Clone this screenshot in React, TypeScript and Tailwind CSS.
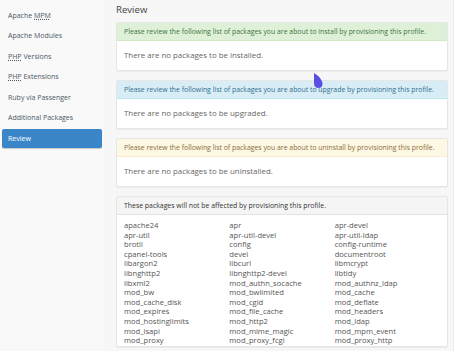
import React from 'react'

const nav = [
  { label: 'Apache', abbr: 'MPM', after: '' },
  { label: 'Apache Modules' },
  { label: '', abbr: 'PHP', after: ' Versions' },
  { label: '', abbr: 'PHP', after: ' Extensions' },
  { label: 'Ruby via Passenger' },
  { label: 'Additional Packages' },
]

const packages = [
  'apache24', 'apr', 'apr-devel',
  'apr-util', 'apr-util-devel', 'apr-util-ldap',
  'brotli', 'config', 'config-runtime',
  'cpanel-tools', 'devel', 'documentroot',
  'libargon2', 'libcurl', 'libmcrypt',
  'libnghttp2', 'libnghttp2-devel', 'libtidy',
  'libxml2', 'mod_authn_socache', 'mod_authnz_ldap',
  'mod_bw', 'mod_bwlimited', 'mod_cache',
  'mod_cache_disk', 'mod_cgid', 'mod_deflate',
  'mod_expires', 'mod_file_cache', 'mod_headers',
  'mod_hostinglimits', 'mod_http2', 'mod_ldap',
  'mod_lsapi', 'mod_mime_magic', 'mod_mpm_event',
  'mod_proxy', 'mod_proxy_fcgi', 'mod_proxy_http',
]

function Panel({ tone, title, children }: { tone: 'green' | 'blue' | 'yellow' | 'gray'; title: string; children: React.ReactNode }) {
  const head = {
    green: 'bg-[#dff0d8] text-[#3c763d] border-[#d6e9c6]',
    blue: 'bg-[#d9edf7] text-[#31708f] border-[#bce8f1]',
    yellow: 'bg-[#fcf8e3] text-[#8a6d3b] border-[#faebcc]',
    gray: 'bg-[#f5f5f5] text-[#333] border-[#e3e3e3]',
  }[tone]
  return (
    <div className="rounded-[2px] border border-[#e6e6e6] bg-white shadow-[0_1px_1px_rgba(0,0,0,0.05)]">
      <div className={`h-[18px] overflow-hidden whitespace-nowrap border-b px-[7px] text-[6.9px] leading-[18px] ${head}`}>{title}</div>
      {children}
    </div>
  )
}

function Empty({ text }: { text: string }) {
  return <div className="h-[29px] px-[7px] text-[7.9px] leading-[29px] text-[#666]">{text}</div>
}

export default function App() {
  return (
    <div className="flex h-[351px] w-[474px] overflow-hidden bg-white font-['Open_Sans',sans-serif]">
      <div className="w-[104px] shrink-0 bg-[#f9f9f9] pt-[7px]">
        {nav.map((n, i) => (
          <div key={i} className="h-[20.4px] pl-[8px] text-[7px] leading-[18px] text-[#4a5866]">
            {n.label}
            {n.abbr && (
              <>
                {n.label ? ' ' : ''}
                <span className="underline decoration-dotted underline-offset-1">{n.abbr}</span>
                {n.after}
              </>
            )}
          </div>
        ))}
        <div className="mx-[2px] h-[19px] rounded-[2px] bg-[#3b86c8] pl-[6px] text-[7px] leading-[19px] text-white shadow-[0_1px_1px_rgba(0,0,0,0.2)]">
          Review
        </div>
      </div>
      <div className="relative w-[350px] shrink-0 border-r border-[#ececec] bg-[#f7f7f7] pl-[12px] pr-[5px]">
        <div className="h-[22px] pt-[3px] text-[9.6px] leading-[14px] text-[#444]">Review</div>
        <div className="flex flex-col gap-[9px]">
          <Panel tone="green" title="Please review the following list of packages you are about to install by provisioning this profile.">
            <Empty text="There are no packages to be installed." />
          </Panel>
          <Panel tone="blue" title="Please review the following list of packages you are about to upgrade by provisioning this profile.">
            <Empty text="There are no packages to be upgraded." />
          </Panel>
          <Panel tone="yellow" title="Please review the following list of packages you are about to uninstall by provisioning this profile.">
            <Empty text="There are no packages to be uninstalled." />
          </Panel>
          <Panel tone="gray" title="These packages will not be affected by provisioning this profile.">
            <div className="grid grid-cols-3 px-[7px] pt-[6px] text-[7.6px] leading-[9.6px] text-[#555]">
              {packages.map(p => (
                <div key={p}>{p}</div>
              ))}
            </div>
          </Panel>
        </div>
        <svg className="absolute left-[208px] top-[72px]" width="12" height="17" viewBox="0 0 12 17">
          <path d="M2 1 Q10 6 10.5 11.5 Q10.5 16 6.5 16 Q2 16 2 11 Z" fill="#5a4fe0" />
        </svg>
      </div>
      <div className="flex-1 bg-white" />
    </div>
  )
}
